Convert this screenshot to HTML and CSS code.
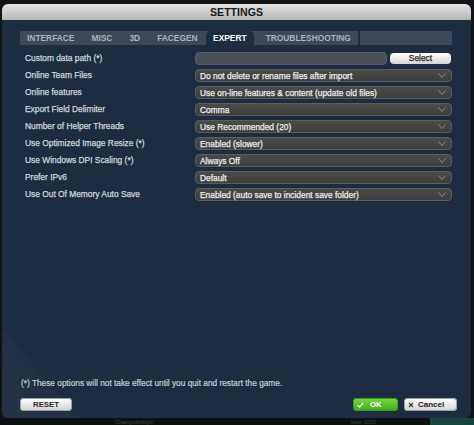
FILE: index.html
```html
<!DOCTYPE html>
<html>
<head>
<meta charset="utf-8">
<title>Settings</title>
<link rel="stylesheet" href="styles.css">
</head>
<body>
<div class="screen">
  <div class="topstrip"></div>
  <div class="middle">
    <div class="dialog">
      <div class="titlebar">SETTINGS</div>
      <div class="content">
        <div class="tabs">
          <span class="tab first">INTERFACE</span>
          <span class="tab">MISC</span>
          <span class="tab">3D</span>
          <span class="tab">FACEGEN</span>
          <span class="tab active">EXPERT</span>
          <span class="tab trouble">TROUBLESHOOTING</span>
          <span class="tabsep"></span>
          <span class="tabfill"></span>
        </div>
        <div class="rows">
          <div class="row">
            <span class="label">Custom data path (*)</span>
            <div class="pathctl">
              <div class="pathinput"></div>
              <button class="btn select">Select</button>
            </div>
          </div>
          <div class="row">
            <span class="label">Online Team Files</span>
            <div class="dropdown"><span>Do not delete or rename files after import</span><svg class="chev" width="8" height="5" viewBox="0 0 8 5"><path d="M0.5 0.5 L4 4.5 L7.5 0.5" fill="none" stroke="#8a8a8a" stroke-width="1"/></svg></div>
          </div>
          <div class="row">
            <span class="label">Online features</span>
            <div class="dropdown"><span>Use on-line features &amp; content (update old files)</span><svg class="chev" width="8" height="5" viewBox="0 0 8 5"><path d="M0.5 0.5 L4 4.5 L7.5 0.5" fill="none" stroke="#8a8a8a" stroke-width="1"/></svg></div>
          </div>
          <div class="row">
            <span class="label">Export Field Delimiter</span>
            <div class="dropdown"><span>Comma</span><svg class="chev" width="8" height="5" viewBox="0 0 8 5"><path d="M0.5 0.5 L4 4.5 L7.5 0.5" fill="none" stroke="#8a8a8a" stroke-width="1"/></svg></div>
          </div>
          <div class="row">
            <span class="label">Number of Helper Threads</span>
            <div class="dropdown"><span>Use Recommended (20)</span><svg class="chev" width="8" height="5" viewBox="0 0 8 5"><path d="M0.5 0.5 L4 4.5 L7.5 0.5" fill="none" stroke="#8a8a8a" stroke-width="1"/></svg></div>
          </div>
          <div class="row">
            <span class="label">Use Optimized Image Resize (*)</span>
            <div class="dropdown"><span>Enabled (slower)</span><svg class="chev" width="8" height="5" viewBox="0 0 8 5"><path d="M0.5 0.5 L4 4.5 L7.5 0.5" fill="none" stroke="#8a8a8a" stroke-width="1"/></svg></div>
          </div>
          <div class="row">
            <span class="label">Use Windows DPI Scaling (*)</span>
            <div class="dropdown"><span>Always Off</span><svg class="chev" width="8" height="5" viewBox="0 0 8 5"><path d="M0.5 0.5 L4 4.5 L7.5 0.5" fill="none" stroke="#8a8a8a" stroke-width="1"/></svg></div>
          </div>
          <div class="row">
            <span class="label">Prefer IPv6</span>
            <div class="dropdown"><span>Default</span><svg class="chev" width="8" height="5" viewBox="0 0 8 5"><path d="M0.5 0.5 L4 4.5 L7.5 0.5" fill="none" stroke="#8a8a8a" stroke-width="1"/></svg></div>
          </div>
          <div class="row">
            <span class="label">Use Out Of Memory Auto Save</span>
            <div class="dropdown"><span>Enabled (auto save to incident save folder)</span><svg class="chev" width="8" height="5" viewBox="0 0 8 5"><path d="M0.5 0.5 L4 4.5 L7.5 0.5" fill="none" stroke="#8a8a8a" stroke-width="1"/></svg></div>
          </div>
        </div>
        <div class="spacer"></div>
        <p class="note">(*) These options will not take effect until you quit and restart the game.</p>
        <div class="footer">
          <button class="btn reset">RESET</button>
          <div class="actions">
            <button class="btn ok"><svg class="ico" width="7" height="6" viewBox="0 0 7 6"><path d="M0.8 3.2 L2.6 5 L6.2 0.9" fill="none" stroke="#ffffff" stroke-width="1.3"/></svg><span>OK</span></button>
            <button class="btn cancel"><svg class="ico" width="6" height="6" viewBox="0 0 6 6"><path d="M1 1 L5 5 M5 1 L1 5" fill="none" stroke="#333333" stroke-width="1.2"/></svg><span>Cancel</span></button>
          </div>
        </div>
      </div>
    </div>
  </div>
  <div class="bottomstrip">
    <span class="ghost g1">Championships</span>
    <span class="ghost g2">Inter 2023</span>
    <span class="teal"></span>
  </div>
</div>
</body>
</html>
```

FILE: styles.css
```css
* { box-sizing: border-box; }
html, body { margin: 0; padding: 0; }
body {
  width: 474px;
  height: 425px;
  overflow: hidden;
  background: #121316;
  font-family: "Liberation Sans", Arial, sans-serif;
}
.screen { display: flex; flex-direction: column; height: 425px; }
.topstrip { height: 4px; flex: none; }
.middle { display: flex; padding-left: 2px; flex: none; }
.dialog {
  width: 469px;
  height: 414px;
  border-radius: 6px;
  overflow: hidden;
  display: flex;
  flex-direction: column;
  background: #1e2c41;
}
.titlebar {
  height: 16px;
  flex: none;
  background: linear-gradient(#e2e2e2, #b8b8b8);
  text-align: center;
  font-weight: bold;
  font-size: 10.6px;
  line-height: 16px;
  color: #1b1b1b;
}
.content {
  flex: 1;
  display: flex;
  flex-direction: column;
  padding: 11px 19px 7px 18px;
  background-color: #1e2c41;
  background-image: linear-gradient(50deg, rgba(255,255,255,0.03) 0, rgba(255,255,255,0.018) 56px, transparent 60px);
}
.tabs { display: flex; height: 14px; flex: none; background: #3e4859; }
.tab {
  padding: 0 8.5px;
  font-weight: bold;
  font-size: 8.4px;
  line-height: 14px;
  color: #aab2bd;
  white-space: nowrap;
}
.tab.first { padding-left: 7px; }
.tab.active { background: #1e2c41; color: #ffffff; border-radius: 5px 5px 0 0; padding: 0 7px; }
.tab.trouble { padding: 0 7px 0 12px; }
.tabsep { width: 2px; background: #1e2c41; }
.tabfill { flex: 1; }
.rows { display: flex; flex-direction: column; gap: 4px; margin-top: 7px; }
.row {
  display: grid;
  grid-template-columns: 175px 257px;
  height: 13px;
  align-items: center;
}
.label {
  padding-left: 5px;
  font-size: 8.4px;
  line-height: 13px;
  color: #d0d5dc;
  white-space: nowrap;
  -webkit-text-stroke: 0.25px #d0d5dc;
}
.dropdown {
  height: 13px;
  display: flex;
  align-items: center;
  justify-content: space-between;
  padding: 0 5px 0 4px;
  background: linear-gradient(#4b4b4b, #3d3d3d);
  border: 1px solid #5d5d5d;
  border-radius: 4px;
  color: #ececec;
  font-size: 8.4px;
  white-space: nowrap;
  -webkit-text-stroke: 0.25px #ececec;
}
.chev { flex: none; }
.pathctl { display: flex; align-items: center; gap: 3px; }
.pathinput {
  width: 192px;
  height: 13px;
  background: #4a5059;
  border: 1px solid #555b64;
  border-radius: 4px;
}
.btn {
  font-family: inherit;
  border: none;
  padding: 0;
  margin: 0;
}
.select {
  width: 61px;
  height: 11px;
  border-radius: 4px;
  background: linear-gradient(#ffffff, #d6d6d6);
  color: #222222;
  font-size: 8.4px;
  line-height: 11px;
  text-align: center;
  -webkit-text-stroke: 0.25px #222222;
}
.spacer { flex: 1; }
.note {
  margin: 0 0 10px 1px;
  font-size: 8.3px;
  line-height: 10px;
  color: #c6ccd3;
  white-space: nowrap;
  -webkit-text-stroke: 0.2px #c6ccd3;
}
.footer {
  display: flex;
  justify-content: space-between;
  align-items: center;
  height: 13px;
  margin-right: -5px;
  flex: none;
}
.reset {
  width: 52px;
  height: 13px;
  border-radius: 4px;
  background: linear-gradient(#ffffff, #d2d2d2);
  box-shadow: inset 0 0 0 1px #9aa0a8;
  font-weight: bold;
  font-size: 7.8px;
  color: #2a2a2a;
}
.actions { display: flex; gap: 6px; }
.ok {
  width: 45px;
  height: 13px;
  border-radius: 4px;
  background: linear-gradient(#78db46, #3fa81f);
  box-shadow: inset 0 0 0 1px #3a9a1c;
  color: #ffffff;
  font-weight: bold;
  font-size: 7.8px;
  display: flex;
  align-items: center;
  gap: 6px;
  padding-left: 4px;
}
.cancel {
  width: 53px;
  height: 13px;
  border-radius: 4px;
  background: linear-gradient(#ffffff, #d4d4d4);
  box-shadow: inset 0 0 0 1px #9aa0a8;
  color: #222222;
  font-weight: bold;
  font-size: 8px;
  display: flex;
  align-items: center;
  gap: 4px;
  padding-left: 4px;
}
.ico { flex: none; }
.bottomstrip {
  flex: 1;
  display: flex;
  align-items: flex-start;
  background: #0f1012;
  overflow: hidden;
}
.ghost {
  font-size: 5.5px;
  line-height: 6px;
  color: #3e4146;
  margin-top: 1px;
  white-space: nowrap;
}
.g1 { margin-left: 115px; }
.g2 { margin-left: 198px; }
.teal { margin-left: auto; width: 44px; height: 100%; background: #17443c; }
```
